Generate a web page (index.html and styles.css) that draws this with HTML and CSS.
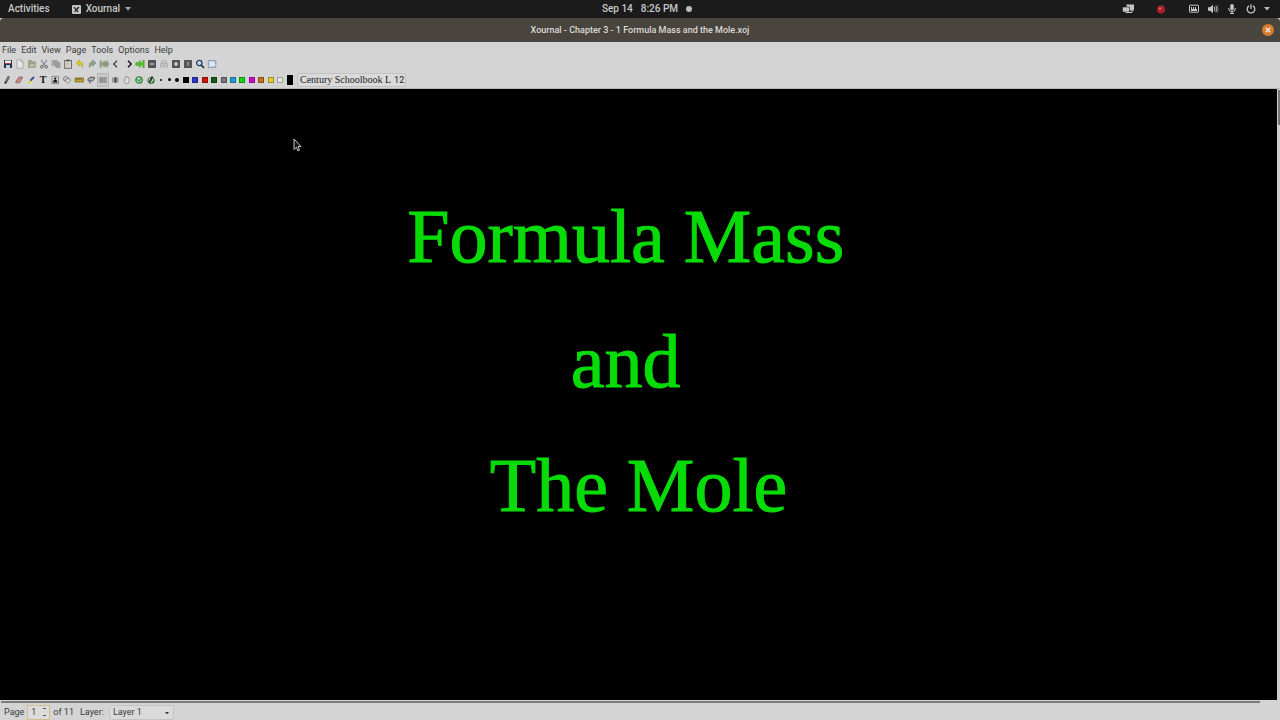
FILE: index.html
```html
<!DOCTYPE html>
<html lang="en">
<head>
<meta charset="utf-8">
<title>Xournal - Chapter 3 - 1 Formula Mass and the Mole.xoj</title>
<link rel="stylesheet" href="styles.css">
</head>
<body>
<header class="topbar">
  <div class="top-left">
    <button class="top-btn">Activities</button>
    <button class="top-btn app-menu">
      <svg class="i9" viewBox="0 0 9 9"><rect width="9" height="9" rx="1" fill="#c4c4c4"/><path d="M2 2.200 6 7M6.500 2 2.500 7M5 4.500 7 2" stroke="#222" stroke-width="1.200" fill="none"/></svg>
      Xournal
      <svg class="caret" viewBox="0 0 6 4"><path d="M0 0h6L3 3.500z" fill="#aaa"/></svg>
    </button>
  </div>
  <button class="top-btn clock"><span>Sep 14</span><span>8:26 PM</span><i class="notice"></i></button>
  <div class="top-right">
    <svg class="tray windows" viewBox="0 0 12 10"><path d="M4.500.500H12v6H4.500z" fill="#c4c4c4"/><path d="M.5 3h7v5h-7z" fill="#c4c4c4" stroke="#1b1b1b" stroke-width=".6"/><path d="M3.500 8.500h6.500V6.500" stroke="#c4c4c4" fill="none"/></svg>
    <svg class="tray berry" viewBox="0 0 12 10"><circle cx="6" cy="5.500" r="4" fill="#b31c2a"/><path d="M3 1.500 6 2.500 9 .8 7 3.200z" fill="#575f4b"/><circle cx="5" cy="4.500" r="1" fill="#ee8790"/></svg>
    <svg class="tray" viewBox="0 0 12 10"><rect x="1.500" y="1.200" width="9" height="7" rx=".5" fill="none" stroke="#c4c4c4"/><path d="M3 3h1v2h1V3h1v2h1V3h1v2h1v2H3z" fill="#c4c4c4"/></svg>
    <svg class="tray" viewBox="0 0 12 10"><path d="M1 3.300h2L6 .7v8.600L3 6.700H1z" fill="#c4c4c4"/><path d="M7.300 3q1.300 2 0 4M8.800 1.800q2.300 3.200 0 6.400" fill="none" stroke="#c4c4c4"/><path d="M10.300.8q2.500 4.200 0 8.400" fill="none" stroke="#777" stroke-width=".7"/></svg>
    <svg class="tray" viewBox="0 0 12 10"><rect x="4.200" y="0" width="3.600" height="6.500" rx="1.800" fill="#c4c4c4"/><path d="M2.700 4v1q.3 2.700 3.300 2.700T9.300 5V4M6 7.500V10M4 9.500h4" fill="none" stroke="#c4c4c4"/></svg>
    <svg class="tray" viewBox="0 0 12 10"><path d="M4 1.900a3.800 3.800 0 1 0 4 0M6 .2v4.800" fill="none" stroke="#c4c4c4" stroke-width="1.300"/></svg>
    <svg class="caret" viewBox="0 0 6 4"><path d="M0 0h6L3 3.500z" fill="#bbb"/></svg>
  </div>
</header>

<div class="titlebar">
  <h1 class="title">Xournal - Chapter 3 - 1 Formula Mass and the Mole.xoj</h1>
  <button class="close" aria-label="Close"><svg viewBox="0 0 12 12"><path d="M3.800 3.800l4.400 4.400M8.200 3.800 3.800 8.200" stroke="#f5e4d4" stroke-width="1.500"/></svg></button>
</div>

<nav class="menubar">
  <button>File</button><button>Edit</button><button>View</button><button>Page</button><button>Tools</button><button>Options</button><button>Help</button>
</nav>

<div class="toolbar main-row">
  <button class="tool" aria-label="Save"><svg viewBox="0 0 10 10"><path d="M1 1h8v8H1z" fill="#26374f"/><path d="M2 1.500h6v3H2z" fill="#e8e8ee"/><path d="M2 4h6v1H2z" fill="#b43d44"/><path d="M3 6h4v3H3z" fill="#c5ccd6"/></svg></button>
  <button class="tool" aria-label="New"><svg viewBox="0 0 10 10"><path d="M2 .8h4L8.200 3v6.300H2z" fill="#e6e6e6" stroke="#999" stroke-width=".7"/><path d="M6 .8V3h2.200" fill="none" stroke="#999" stroke-width=".7"/></svg></button>
  <button class="tool" aria-label="Open"><svg viewBox="0 0 10 10"><path d="M1.500 8.500v-7h3l.7 1.200h3V8.500z" fill="#a2a58e" stroke="#8c8f7c" stroke-width=".6"/><path d="M1.500 8.500 3 4.500h6l-1 4z" fill="#b8bba4" stroke="#8f927a" stroke-width=".6"/></svg></button>
  <button class="tool" aria-label="Cut"><svg viewBox="0 0 10 10"><path d="M2 1l4.500 6M8 1 3.500 7" stroke="#888" stroke-width="1.200"/><circle cx="2.800" cy="7.800" r="1.300" fill="none" stroke="#666"/><circle cx="7.200" cy="7.800" r="1.300" fill="none" stroke="#666"/></svg></button>
  <button class="tool" aria-label="Copy"><svg viewBox="0 0 10 10"><path d="M1 1.500h5.500v5H1z" fill="#aaa" stroke="#999" stroke-width=".7"/><path d="M3.500 3.500H9v5H5z" fill="#aaa" stroke="#888" stroke-width=".7"/><path d="M4.500 5H8M5 6.500h3" stroke="#888" stroke-width=".6"/></svg></button>
  <button class="tool" aria-label="Paste"><svg viewBox="0 0 10 10"><rect x="1.700" y="1.500" width="6.800" height="7.800" fill="#d8d5cd" stroke="#75675a"/><path d="M3.500.5h3v2h-3z" fill="#555"/><path d="M3.500 4.500h3M3.500 6h3" stroke="#aaa" stroke-width=".6"/></svg></button>
  <button class="tool" aria-label="Undo"><svg viewBox="0 0 10 10"><path d="M1 4 4.500.8v2q4.500 0 3 6Q6.500 5.500 4.500 5.300v2z" fill="#d8c72c" stroke="#b0a435" stroke-width=".5"/></svg></button>
  <button class="tool" aria-label="Redo"><svg viewBox="0 0 10 10"><path d="M9 4 5.500.8v2q-4.500 0-3 6Q3.500 5.500 5.500 5.300v2z" fill="#8fa188" stroke="#6f846b" stroke-width=".5"/></svg></button>
  <button class="tool" aria-label="First page"><svg viewBox="0 0 10 10"><path d="M1 1.500h1.300v7H1zM2.500 5 5.500 1.500v2L8.500 1.500v2.300h1v2.400h-1v2.300L5.500 6.500v2z" fill="#8c9c84" stroke="#7c8a75" stroke-width=".4"/></svg></button>
  <button class="tool" aria-label="Previous page"><svg viewBox="0 0 10 10"><path d="M6 1.700 2.800 5 6 8.300" fill="none" stroke="#333" stroke-width="1.200"/></svg></button>
  <button class="tool" aria-label="Next page"><svg viewBox="0 0 10 10"><path d="M5 1.700 8.200 5 5 8.300" fill="none" stroke="#111" stroke-width="1.400"/></svg></button>
  <button class="tool" aria-label="Last page"><svg viewBox="0 0 10 10"><path d="M9.200 1.300H7.800v7.400h1.400zM7.500 5 4.500 1.500v2H.8v3h3.700v2z" fill="#58bd2b" stroke="#4ba028" stroke-width=".6"/></svg></button>
  <button class="tool" aria-label="Zoom out"><svg viewBox="0 0 10 10"><rect x="1" y="1" width="8" height="8" fill="#555"/><path d="M3 5h4" stroke="#ddd" stroke-width="1.200"/></svg></button>
  <button class="tool" aria-label="Page width"><svg viewBox="0 0 10 10"><path d="M2.500 4V2h5v2M1.500 4.500h7v3.500h-7zM3 6h4" fill="#ccc" stroke="#a4a4a4" stroke-width=".8"/></svg></button>
  <button class="tool" aria-label="Zoom in"><svg viewBox="0 0 10 10"><rect x="1" y="1" width="8" height="8" fill="#555"/><path d="M3 5h4M5 3v4" stroke="#eee" stroke-width="1.200"/></svg></button>
  <button class="tool" aria-label="Normal size"><svg viewBox="0 0 10 10"><rect x="1" y="1" width="8" height="8" fill="#555"/><path d="M4.200 3.700 5 3v4" fill="none" stroke="#bbb"/></svg></button>
  <button class="tool" aria-label="Set zoom"><svg viewBox="0 0 10 10"><circle cx="4.300" cy="4" r="2.700" fill="#cddcf0" stroke="#263d71" stroke-width="1.300"/><path d="M6.200 6 9 9" stroke="#222" stroke-width="1.600"/></svg></button>
  <button class="tool" aria-label="Fullscreen"><svg viewBox="0 0 10 10"><rect x="1.300" y="1.500" width="7.500" height="7" fill="#ccd6e4" stroke="#6f8bb2" stroke-dasharray="3 1"/><path d="M3 3.500h4v3H3z" fill="#e6eaf0"/></svg></button>
</div>

<div class="toolbar tools-row">
  <button class="tool" aria-label="Pencil"><svg viewBox="0 0 10 10"><path d="M3 8.500 7 1.500" stroke="#333" stroke-width="2.200"/><path d="M3.800 6.800 6.800 2" stroke="#b99b7d" stroke-width="1"/></svg></button>
  <button class="tool" aria-label="Eraser"><svg viewBox="0 0 10 10"><path d="M1.500 7 5 2h3.700L5.500 7.800H2z" fill="#cf8684" stroke="#7c5454" stroke-width=".7"/></svg></button>
  <button class="tool" aria-label="Highlighter"><svg viewBox="0 0 10 10"><path d="M2.500 8.500 5 5" stroke="#ded43c" stroke-width="2.200"/><path d="M4.500 5.500 8 2" stroke="#354c9c" stroke-width="1.800"/></svg></button>
  <button class="tool glyph" aria-label="Text">T</button>
  <button class="tool" aria-label="Image"><svg viewBox="0 0 10 10"><rect x="2" y="1.300" width="6.500" height="7.400" fill="#ddd" stroke="#777" stroke-width=".8"/><circle cx="5.200" cy="3.600" r="1.200" fill="#111"/><path d="M3 7.500q0-2.700 2.200-2.700t2.300 2.700z" fill="#111"/></svg></button>
  <button class="tool" aria-label="Shape recognizer"><svg viewBox="0 0 10 10"><circle cx="3.800" cy="3.800" r="2.300" fill="none" stroke="#777"/><path d="M3.500 4 8 3.500 8.500 6 6 8.500 3.500 6z" fill="#d8d8dd" stroke="#777" stroke-width=".8"/></svg></button>
  <button class="tool" aria-label="Ruler"><svg viewBox="0 0 10 10"><path d="M1 3h8.500v4H1z" fill="#c3a52d" stroke="#705d20" stroke-width=".7"/><path d="M3 3v2M5 3v2M7 3v2" stroke="#55471c" stroke-width=".7"/></svg></button>
  <button class="tool" aria-label="Select region"><svg viewBox="0 0 10 10"><path d="M4 6Q1 6 2 4t5-2q2.500 0 1.300 2.300T4 6q-1 1 .3 2.500" fill="#aaa" stroke="#555" stroke-width="1"/></svg></button>
  <button class="tool active" aria-label="Select rectangle" aria-pressed="true"><svg viewBox="0 0 10 10"><rect x="1.500" y="2.500" width="7" height="5" fill="#999" stroke="#888" stroke-width=".8" stroke-dasharray="1 .5"/></svg></button>
  <button class="tool" aria-label="Vertical space"><svg viewBox="0 0 10 10"><path d="M2 2.500h2v5H2zM7 2.500h1.500v5H7z" fill="#999"/><path d="M4 2.500h3v5H4z" fill="#777"/><path d="M5.500 2v6" stroke="#444"/></svg></button>
  <button class="tool" aria-label="Hand"><svg viewBox="0 0 10 10"><path d="M3.300 8.500 2 5.500l1-.4V2.500h1v-1h1v.7h1.200v.6h1V6L6.500 8.500z" fill="#ddd" stroke="#888" stroke-width=".7"/></svg></button>
  <button class="tool" aria-label="Default tool"><svg viewBox="0 0 10 10"><circle cx="5" cy="5" r="3.200" fill="#cfe0d0" stroke="#397f42" stroke-width="1.300"/><path d="M2.500 4 5 6l2.500-2.500" fill="none" stroke="#3f9648" stroke-width="1.400"/></svg></button>
  <button class="tool" aria-label="Default pen"><svg viewBox="0 0 10 10"><circle cx="5" cy="5.500" r="3" fill="#cfe0d0" stroke="#397f42" stroke-width="1.200"/><path d="M3.500 7.500 6.500 1.500" stroke="#333" stroke-width="1.800"/><path d="M6 7.500 8.500 6" stroke="#397f42" stroke-width="1.600"/></svg></button>
  <div class="widths">
    <button aria-label="Fine"><i class="dot d2"></i></button><button aria-label="Medium"><i class="dot d3"></i></button><button aria-label="Thick"><i class="dot d4"></i></button>
  </div>
  <div class="swatches">
    <button class="black" aria-label="Black"></button><button class="blue" aria-label="Blue"></button><button class="red" aria-label="Red"></button><button class="green" aria-label="Green"></button><button class="gray" aria-label="Gray"></button><button class="lblue" aria-label="Light blue"></button><button class="lgreen" aria-label="Light green"></button><button class="magenta" aria-label="Magenta"></button><button class="orange" aria-label="Orange"></button><button class="yellow" aria-label="Yellow"></button><button class="white" aria-label="White"></button>
  </div>
  <button class="current" aria-label="Pen color"></button>
  <button class="font-btn"><span>Century Schoolbook L</span><span class="size">12</span></button>
</div>

<main class="work">
  <div class="page">
    <p class="note n1">Formula Mass</p>
    <p class="note n2">and</p>
    <p class="note n3">The Mole</p>
    <svg class="pointer" viewBox="0 0 9 14"><path d="M1 1v10.500l2.400-2.200 1.500 3.600 1.600-.8L5 8.600h3z" fill="#111" stroke="#ddd" stroke-width=".9"/></svg>
  </div>
  <div class="vscroll"><i></i></div>
</main>
<div class="hscroll"><i></i></div>

<footer class="status">
  <label for="pg">Page</label>
  <span class="spin"><input id="pg" type="text" value="1"><span class="arrows"><button aria-label="Next"></button><button aria-label="Previous"></button></span></span>
  <span class="of">of 11</span>
  <label for="layer">Layer:</label>
  <span class="pick"><select id="layer"><option>Layer 1</option></select><svg viewBox="0 0 6 4"><path d="M1 1h4L3 3.300z" fill="#333"/></svg></span>
</footer>
</body>
</html>
```

FILE: styles.css
```css
* { box-sizing: border-box; }
body {
  margin: 0;
  height: 100vh;
  display: flex;
  flex-direction: column;
  overflow: hidden;
  background: #d4d4d4;
  color: #3c3c3c;
  font: 9px/12px Roboto, "Noto Sans", sans-serif;
}
button, input, select {
  font: inherit;
  color: inherit;
  border: 0;
  margin: 0;
  padding: 0;
  background: none;
}
svg { display: block; }

/* desktop panel */
.topbar {
  height: 18px;
  flex: none;
  display: grid;
  grid-template-columns: 1fr auto 1fr;
  align-items: center;
  padding: 0 10px 0 8px;
  background: #1b1b1b;
  color: #c8c8c8;
}
.top-left { display: flex; gap: 22px; }
.top-btn {
  display: flex;
  align-items: center;
  font: 500 10px/16px Roboto, "Noto Sans", sans-serif;
}
.app-menu { gap: 5px; }
.i9 { width: 9px; height: 9px; }
.caret { width: 6px; height: 4px; }
.clock { gap: 8px; padding-left: 16px; }
.notice { width: 6px; height: 6px; border-radius: 50%; background: #bdbdbd; }
.top-right { display: flex; justify-content: flex-end; align-items: center; gap: 7px; }
.tray { width: 12px; height: 10px; }
.windows { margin-right: 14px; }
.berry { margin-right: 14px; }

/* window frame */
.titlebar {
  height: 24px;
  flex: none;
  display: grid;
  grid-template-columns: 1fr auto 1fr;
  align-items: center;
  padding: 0 6px;
  border-radius: 4px 4px 0 0;
  background: #49443d;
}
.title {
  grid-column: 2;
  margin: 0;
  color: #dcdad6;
  font: 500 9px/14px Roboto, "Noto Sans", sans-serif;
}
.close {
  justify-self: end;
  width: 12px;
  height: 12px;
  border-radius: 50%;
  background: #d57d2c;
}

.menubar {
  height: 14px;
  flex: none;
  display: flex;
  gap: 5px;
  padding: 1px 2px 0;
}

.toolbar {
  height: 15px;
  flex: none;
  display: flex;
  align-items: center;
  padding: 0 1px;
}
.main-row { padding: 0 2px; }
.tools-row { height: 18px; border-bottom: 1px solid #b4b4b4; }
.tool {
  width: 12px;
  height: 14px;
  display: flex;
  align-items: center;
  justify-content: center;
}
.tool svg { width: 10px; height: 10px; }
.tool.active { background: #c8c8c8; outline: 1px solid #b4b4b4; outline-offset: -1px; }
.glyph { color: #111; font: bold 10px/12px "Liberation Serif", serif; }
.widths { display: flex; }
.widths button { width: 8px; height: 14px; display: flex; align-items: center; justify-content: center; }
.dot { border-radius: 50%; background: #000; }
.d2 { width: 2px; height: 2px; }
.d3 { width: 3px; height: 3px; }
.d4 { width: 4px; height: 4px; }
.swatches { display: flex; justify-content: space-between; width: 100px; margin-left: 2px; }
.swatches button { width: 6px; height: 6px; border: 1px solid rgba(0, 0, 0, .3); }
.swatches .black { background: #000; }
.swatches .blue { background: #2b35c4; }
.swatches .red { background: #d0140c; }
.swatches .green { background: #0d5c14; }
.swatches .gray { background: #777; }
.swatches .lblue { background: #1e9bd0; }
.swatches .lgreen { background: #19d119; }
.swatches .magenta { background: #cc0ccc; }
.swatches .orange { background: #cf711a; }
.swatches .yellow { background: #dfd02c; }
.swatches .white { background: #e6e6e6; }
.current { width: 6px; height: 10px; margin: 0 4px; background: #000; }
.font-btn {
  height: 14px;
  display: flex;
  align-items: center;
  gap: 3px;
  padding: 0 1px 0 2px;
  border: 1px solid #c2c2c2;
  border-radius: 2px;
  background: #dadada;
  color: #222;
  font: 10px/12px "Liberation Serif", serif;
}
.size { font: 9px/12px Roboto, "Noto Sans", sans-serif; }

/* document area */
.work { flex: 1; display: flex; min-height: 0; background: #cfcfcf; }
.page { position: relative; flex: 1; overflow: hidden; background: #000; }
.note {
  position: absolute;
  margin: 0;
  transform: translateX(-50%);
  white-space: nowrap;
  color: #08dc08;
  -webkit-text-stroke: 1px #08dc08;
  font: 76px/88px "Liberation Serif", serif;
}
.n1 { left: 49%; top: 103px; }
.n2 { left: 49%; top: 228px; }
.n3 { left: 50%; top: 352px; }
.pointer { position: absolute; left: 23%; top: 49px; width: 9px; height: 14px; margin-left: -1px; }
.vscroll { width: 3px; padding: 1px 0 0 1px; }
.vscroll i { display: block; height: 35px; background: #777; }
.hscroll { height: 4px; flex: none; padding: 1px 20px 0 1px; background: #d4d4d4; }
.hscroll i { display: block; height: 2px; background: #7c7c7c; }

.status {
  height: 16px;
  flex: none;
  display: flex;
  align-items: center;
  padding: 0 4px;
}
.spin {
  display: flex;
  width: 23px;
  height: 15px;
  margin: 0 3px;
  border: 1px solid #d0bd90;
  background: #dcdcdc;
}
.spin input { width: 15px; padding-left: 3px; outline: none; }
.arrows { display: flex; flex-direction: column; justify-content: space-around; align-items: center; }
.arrows button { width: 3px; height: 1px; background: #555; }
.of { margin-right: 6px; }
.pick { position: relative; margin-left: 5px; }
.pick select {
  display: block;
  appearance: none;
  width: 65px;
  height: 15px;
  padding: 0 3px;
  border: 1px solid #c4c4c4;
  border-radius: 2px;
  background: #dadada;
}
.pick svg { position: absolute; right: 4px; top: 6px; width: 6px; height: 4px; }
```
